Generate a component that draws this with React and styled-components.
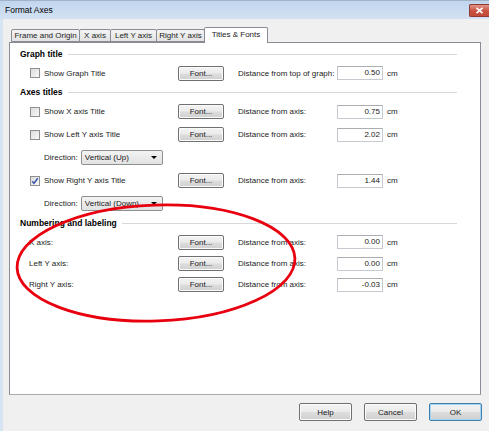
import styled, { createGlobalStyle } from 'styled-components';

const GlobalStyle = createGlobalStyle`
  html, body { margin: 0; padding: 0; background: #f0f0f0; }
  body {
    font-family: "Liberation Sans", Arial, sans-serif;
    font-size: 8px;
    color: #1b1b1b;
  }
`;

const Window = styled.div`
  position: relative;
  width: 489px;
  height: 431px;
  display: flex;
  flex-direction: column;
  overflow: hidden;
`;

const TitleBar = styled.div`
  height: 18px;
  border-top: 1px solid #9fb2c8;
  background: linear-gradient(#c0d5ed, #d3e2f3);
  display: flex;
  align-items: flex-start;
  justify-content: space-between;
  padding-left: 5px;
  font-size: 8.5px;
  line-height: 18px;
  color: #000;
`;

const CloseButton = styled.div`
  margin-top: 3px;
  width: 19px;
  height: 11px;
  border: 1px solid #8d3a32;
  border-right: none;
  border-radius: 2px 0 0 2px;
  background: linear-gradient(#e0968b, #c7513f 55%, #c24a38);
  display: flex;
  align-items: center;
  justify-content: center;
`;

const Body = styled.div`
  flex: 1;
  background: #f0f0f0;
  border-left: 3px solid #d6e3f2;
  padding: 8px 8px 0 6px;
  display: flex;
  flex-direction: column;
`;

const Tabs = styled.div`
  display: flex;
  align-items: flex-end;
  height: 15px;
  padding-left: 2px;
  position: relative;
  z-index: 1;
`;

const Tab = styled.div`
  width: ${(p) => p.$w}px;
  height: ${(p) => (p.$active ? 16 : 13)}px;
  margin-bottom: ${(p) => (p.$active ? -1 : 0)}px;
  margin-right: -1px;
  box-sizing: border-box;
  border: 1px solid #898c95;
  border-bottom: ${(p) => (p.$active ? 'none' : '1px solid #898c95')};
  border-radius: 2px 2px 0 0;
  background: ${(p) => (p.$active ? '#fff' : 'linear-gradient(#f4f4f4, #e2e2e2)')};
  display: flex;
  align-items: center;
  justify-content: center;
  padding-bottom: ${(p) => (p.$active ? 2 : 0)}px;
  white-space: nowrap;
`;

const Panel = styled.div`
  height: 353px;
  box-sizing: border-box;
  border: 1px solid #898c95;
  border-bottom-color: #a9abb0;
  background: #fff;
  padding: 3px 0 0 10px;
  display: flex;
  flex-direction: column;
`;

const Header = styled.div`
  width: 437px;
  height: 16px;
  display: flex;
  align-items: center;
  gap: 5px;
  font-weight: bold;
  font-size: 8.5px;
  color: #000;
  white-space: nowrap;
  &::after {
    content: '';
    flex: 1;
    border-top: 1px solid #d5d8dc;
  }
`;

const Row = styled.div`
  height: ${(p) => p.$h}px;
  display: grid;
  grid-template-columns: 158px 46px 14px 99px 46px auto;
  align-items: center;
`;

const LeftCell = styled.div`
  display: flex;
  align-items: center;
  gap: 4px;
  padding-left: ${(p) => p.$indent}px;
  white-space: nowrap;
`;

const Box = styled.span`
  width: 8px;
  height: 8px;
  border: 1px solid #8e8f8f;
  background: linear-gradient(135deg, #dcdcdc, #f8f8f8);
  display: flex;
  align-items: center;
  justify-content: center;
`;

const Button = styled.div`
  box-sizing: border-box;
  width: ${(p) => p.$w || 46}px;
  height: ${(p) => p.$h || 15}px;
  border: 1px solid ${(p) => (p.$focus ? '#3c7fb1' : '#707070')};
  border-radius: 2px;
  background: linear-gradient(#f3f3f3 0%, #ebebeb 48%, #dddddd 52%, #cfcfcf 100%);
  box-shadow: inset 0 0 0 1px ${(p) => (p.$focus ? '#a6d4ef' : '#fbfbfb')};
  display: flex;
  align-items: center;
  justify-content: center;
`;

const Caption = styled.span`
  grid-column: 4;
  white-space: nowrap;
`;

const Field = styled.div`
  box-sizing: border-box;
  height: 14px;
  border: 1px solid #c6cad0;
  border-top-color: #abadb3;
  background: #fff;
  text-align: right;
  padding-right: 2px;
  line-height: 12px;
`;

const Unit = styled.span`
  padding-left: 4px;
`;

const DirectionRow = styled.div`
  height: ${(p) => p.$h}px;
  display: flex;
  align-items: center;
  gap: 3px;
  padding-left: 24px;
`;

const Select = styled.div`
  box-sizing: border-box;
  width: 82px;
  height: 15px;
  border: 1px solid #8e8f8f;
  border-radius: 2px;
  background: linear-gradient(#f3f3f3, #e2e2e2);
  display: flex;
  align-items: center;
  justify-content: space-between;
  padding: 0 5px 0 3px;
`;

const Arrow = styled.span`
  width: 0;
  height: 0;
  border-left: 3px solid transparent;
  border-right: 3px solid transparent;
  border-top: 3px solid #000;
`;

const Footer = styled.div`
  display: flex;
  justify-content: flex-end;
  gap: 12px;
  padding-top: 8px;
  margin-right: -1px;
`;

const Annotation = styled.svg`
  position: absolute;
  left: 0;
  top: 0;
  pointer-events: none;
`;

const Check = ({ checked }) => (
  <Box>
    {checked && (
      <svg width="8" height="8" viewBox="0 0 8 8">
        <path d="M1.2 4.2 L3 6.2 L6.8 1.2" fill="none" stroke="#3d58a8" strokeWidth="1.5" />
      </svg>
    )}
  </Box>
);

const SettingRow = ({ h, check, checked, label, indent, caption, value }) => (
  <Row $h={h}>
    <LeftCell $indent={indent}>
      {check && <Check checked={checked} />}
      <span>{label}</span>
    </LeftCell>
    <Button>Font...</Button>
    <Caption>{caption}</Caption>
    <Field>{value}</Field>
    <Unit>cm</Unit>
  </Row>
);

const tabs = [
  ['Frame and Origin', 69],
  ['X axis', 32],
  ['Left Y axis', 47],
  ['Right Y axis', 49],
  ['Titles & Fonts', 64, true],
];

export default function App() {
  return (
    <Window>
      <GlobalStyle />
      <TitleBar>
        <span>Format Axes</span>
        <CloseButton>
          <svg width="9" height="7" viewBox="0 0 9 7">
            <path d="M1.5 0.8 L7.5 6.2 M7.5 0.8 L1.5 6.2" stroke="#fff" strokeWidth="1.8" />
          </svg>
        </CloseButton>
      </TitleBar>
      <Body>
        <Tabs>
          {tabs.map(([t, w, a]) => (
            <Tab key={t} $w={w} $active={a}>
              {t}
            </Tab>
          ))}
        </Tabs>
        <Panel>
          <Header>Graph title</Header>
          <SettingRow h={22} check indent={10} label="Show Graph Title" caption="Distance from top of graph:" value="0.50" />
          <Header>Axes titles</Header>
          <SettingRow h={23} check indent={10} label="Show X axis Title" caption="Distance from axis:" value="0.75" />
          <SettingRow h={23} check indent={10} label="Show Left Y axis Title" caption="Distance from axis:" value="2.02" />
          <DirectionRow $h={23}>
            <span>Direction:</span>
            <Select>
              <span>Vertical (Up)</span>
              <Arrow />
            </Select>
          </DirectionRow>
          <SettingRow h={23} check checked indent={10} label="Show Right Y axis Title" caption="Distance from axis:" value="1.44" />
          <DirectionRow $h={23}>
            <span>Direction:</span>
            <Select>
              <span>Vertical (Down)</span>
              <Arrow />
            </Select>
          </DirectionRow>
          <Header>Numbering and labeling</Header>
          <SettingRow h={22} indent={9} label="X axis:" caption="Distance from axis:" value="0.00" />
          <SettingRow h={21} indent={9} label="Left Y axis:" caption="Distance from axis:" value="0.00" />
          <SettingRow h={21} indent={9} label="Right Y axis:" caption="Distance from axis:" value="-0.03" />
        </Panel>
        <Footer>
          <Button $w={53} $h={18}>Help</Button>
          <Button $w={53} $h={18}>Cancel</Button>
          <Button $w={53} $h={18} $focus>OK</Button>
        </Footer>
      </Body>
      <Annotation width="489" height="431">
        <ellipse
          cx="156"
          cy="263"
          rx="139"
          ry="58"
          transform="rotate(-2 156 263)"
          fill="none"
          stroke="#e8000f"
          strokeWidth="2.8"
        />
      </Annotation>
    </Window>
  );
}
